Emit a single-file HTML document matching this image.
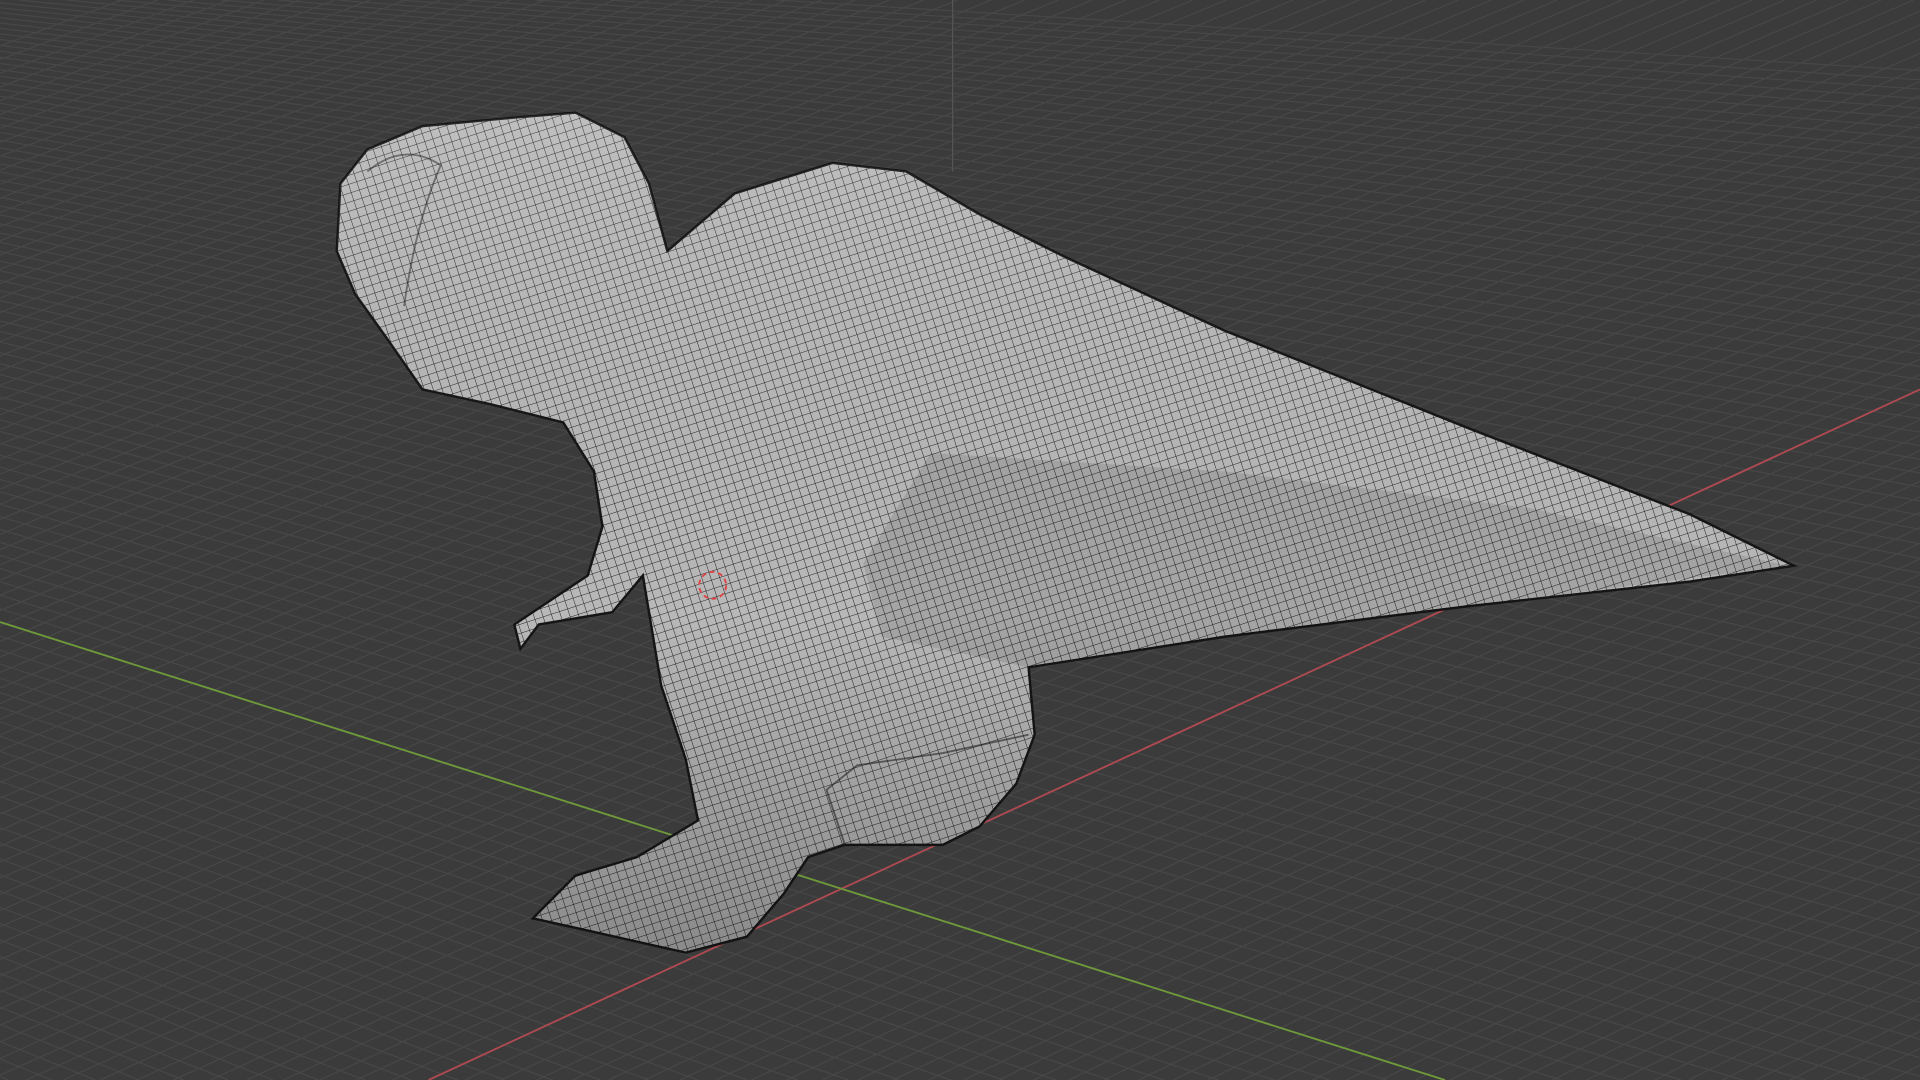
<!DOCTYPE html>
<html><head><meta charset="utf-8"><style>
html,body{margin:0;padding:0;width:1920px;height:1080px;background:#3b3b3b;overflow:hidden}
svg{display:block;position:absolute;left:0;top:0}
</style></head><body>
<svg id="s" width="1920" height="1080" viewBox="0 0 1568 882" preserveAspectRatio="none" xmlns="http://www.w3.org/2000/svg">
<defs>
<pattern id="mesh" width="7" height="7" patternUnits="userSpaceOnUse" patternTransform="rotate(-18)">
<rect width="7" height="7" fill="#b8b8b8"/>
<path d="M0 0H7M0 0V7" stroke="#1e1e1e" stroke-width="0.8" fill="none"/>
</pattern>
<linearGradient id="shade" x1="0" y1="0" x2="0" y2="1">
<stop offset="0" stop-color="#fff" stop-opacity="0.1"/>
<stop offset="0.6" stop-color="#000" stop-opacity="0"/>
<stop offset="1" stop-color="#000" stop-opacity="0.25"/>
</linearGradient>
</defs>
<rect width="1568" height="882" fill="#3b3b3b"/>
<g id="grid" stroke="#474747" stroke-width="1"></g>
<line x1="778" y1="0" x2="778" y2="140" stroke="#555" stroke-width="1"/>
<line x1="350" y1="882" x2="1568" y2="318" stroke="#b04a52" stroke-width="1.5"/>
<line x1="0" y1="508" x2="1180" y2="882" stroke="#6e9a3a" stroke-width="1.5"/>
<g id="dino">
<path d="M278 150 L300 122 L345 103 L420 96 L470 92 L510 112 L530 150 L545 205 L600 158 L680 133 L740 140 L800 175 L870 210 L1000 270 L1200 350 L1380 420 L1465 462 L1380 475 L1200 495 L1000 520 L840 545 L845 600 L830 640 L800 675 L770 690 L690 690 L660 700 L640 730 L610 765 L560 778 L480 760 L435 750 L470 715 L520 700 L570 670 L560 620 L540 560 L535 530 L525 470 L500 500 L440 510 L425 530 L420 510 L450 490 L480 470 L492 430 L485 385 L460 345 L400 330 L345 318 L315 275 L290 240 L275 205 Z" fill="url(#mesh)" stroke="#151515" stroke-width="2"/>
<path d="M278 150 L300 122 L345 103 L420 96 L470 92 L510 112 L530 150 L545 205 L600 158 L680 133 L740 140 L800 175 L870 210 L1000 270 L1200 350 L1380 420 L1465 462 L1380 475 L1200 495 L1000 520 L840 545 L845 600 L830 640 L800 675 L770 690 L690 690 L660 700 L640 730 L610 765 L560 778 L480 760 L435 750 L470 715 L520 700 L570 670 L560 620 L540 560 L535 530 L525 470 L500 500 L440 510 L425 530 L420 510 L450 490 L480 470 L492 430 L485 385 L460 345 L400 330 L345 318 L315 275 L290 240 L275 205 Z" fill="url(#shade)"/>
<path d="M760 370 L1000 385 L1250 415 L1460 462 L1200 495 L1000 520 L840 545 L720 520 L705 460 Z" fill="#000" opacity="0.1"/>
<path d="M690 690 L675 645 L700 625 L770 615 L840 600" fill="none" stroke="#222" stroke-width="1.5" opacity="0.6"/>
<path d="M300 140 Q330 115 360 135 Q340 180 330 250" fill="none" stroke="#222" stroke-width="1.5" opacity="0.5"/>
</g>
<circle cx="582" cy="478" r="11" fill="none" stroke="#e04040" stroke-width="1.5" stroke-dasharray="4 3"/>
</svg>
<script>
var g=document.getElementById('grid'),ns='http://www.w3.org/2000/svg',W=1568,H=882;
function L(px,py,s){
 // line through (px,py) with slope s, clipped to [0,W]x[0,H]
 var pts=[];
 var y0=py+(0-px)*s, y1=py+(W-px)*s;
 if(y0>=0&&y0<=H)pts.push([0,y0]);
 if(y1>=0&&y1<=H)pts.push([W,y1]);
 if(s!==0){var x0=px+(0-py)/s,x1=px+(H-py)/s;
  if(x0>0&&x0<W)pts.push([x0,0]);
  if(x1>0&&x1<W)pts.push([x1,H]);}
 if(pts.length<2)return;
 var l=document.createElementNS(ns,'line');
 l.setAttribute('x1',pts[0][0]);l.setAttribute('y1',pts[0][1]);
 l.setAttribute('x2',pts[1][0]);l.setAttribute('y2',pts[1][1]);g.appendChild(l);
}
var ox=687,oy=726;
for(var i=-80;i<=80;i++){var t=i*18;var px=ox+t*0.95,py=oy+t*0.30;L(px,py,-0.463+(oy-py)*0.0002);}
for(var j=-80;j<=80;j++){var t=j*19;var px=ox+t*0.9,py=oy-t*0.42;L(px,py,0.317-(oy-py)*0.0004);}
</script>
</body></html>
